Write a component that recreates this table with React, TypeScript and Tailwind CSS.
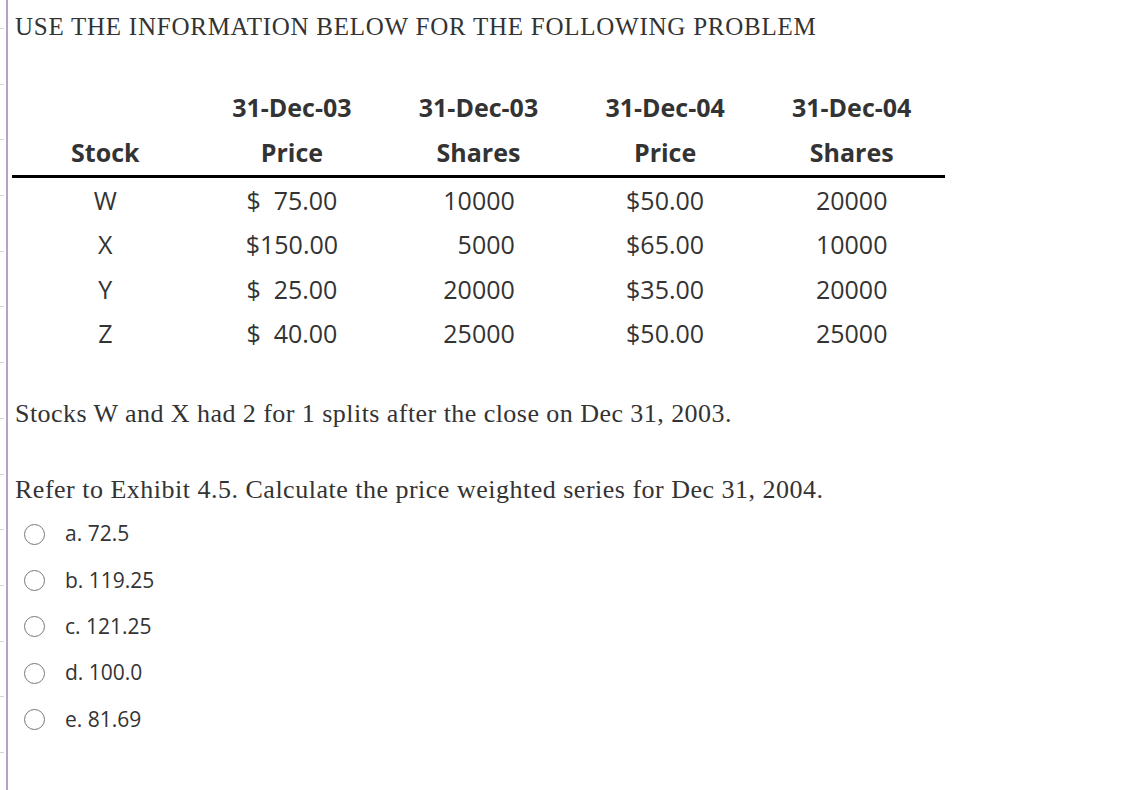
import React from 'react';

const serif = "font-['Liberation_Serif',Georgia,serif]";
const sans = "font-['Open_Sans',sans-serif]";

const rows = [
    { stock: 'W', p03: '$\u00a0\u00a075.00', s03: '10000', p04: '$50.00', s04: '20000' },
    { stock: 'X', p03: '$150.00', s03: '5000', p04: '$65.00', s04: '10000' },
    { stock: 'Y', p03: '$\u00a0\u00a025.00', s03: '20000', p04: '$35.00', s04: '20000' },
    { stock: 'Z', p03: '$\u00a0\u00a040.00', s03: '25000', p04: '$50.00', s04: '25000' },
];

const options = ['a. 72.5', 'b. 119.25', 'c. 121.25', 'd. 100.0', 'e. 81.69'];

export default function App() {
    return (
        <div className="flex min-h-[790px] bg-white text-[#333]">
            {/* gutter ticks */}
            <div className="w-[6px] flex flex-col pt-[28px]">
                {Array.from({ length: 14 }).map((_, i) => (
                    <div key={i} className="h-[55.7px] w-[4px] border-t border-[#d4d4d4]" />
                ))}
            </div>
            <div className="w-[2px] bg-[#b8a0c8]" />

            <div className="flex-1 pl-[4px]">
                <p className={`${serif} pl-[3px] pt-[12px] text-[25px] leading-[30px] tracking-[0.75px]`}>
                    USE THE INFORMATION BELOW FOR THE FOLLOWING PROBLEM
                </p>

                <div className={`${sans} w-[933px] mt-[43px] text-[25px]`}>
                    <div className="grid grid-cols-5 h-[45px] items-center font-bold text-center">
                        <div />
                        <div>31-Dec-03</div>
                        <div>31-Dec-03</div>
                        <div>31-Dec-04</div>
                        <div>31-Dec-04</div>
                    </div>
                    <div className="grid grid-cols-5 h-[48px] items-center font-bold text-center border-b-[3px] border-black">
                        <div>Stock</div>
                        <div>Price</div>
                        <div>Shares</div>
                        <div>Price</div>
                        <div>Shares</div>
                    </div>
                    {rows.map((r) => (
                        <div key={r.stock} className="grid grid-cols-5 h-[44.5px] items-center text-center">
                            <div>{r.stock}</div>
                            <div>{r.p03}</div>
                            <div className="text-right pr-[57px]">{r.s03}</div>
                            <div>{r.p04}</div>
                            <div>{r.s04}</div>
                        </div>
                    ))}
                </div>

                <p className={`${serif} pl-[3px] mt-[43px] text-[26px] leading-[30px] tracking-[0.45px]`}>
                    Stocks W and X had 2 for 1 splits after the close on Dec 31, 2003.
                </p>
                <p className={`${serif} pl-[3px] mt-[46px] text-[26px] leading-[30px] tracking-[0.5px]`}>
                    Refer to Exhibit 4.5. Calculate the price weighted series for Dec 31, 2004.
                </p>

                <div className={`${sans} mt-[6px] flex flex-col text-[21px]`}>
                    {options.map((o) => (
                        <label key={o} className="flex items-center h-[46.3px]">
                            <span className="ml-[12px] w-[21px] h-[21px] rounded-full border-[1.5px] border-[#777] bg-white" />
                            <span className="ml-[20px]">{o}</span>
                        </label>
                    ))}
                </div>
            </div>
        </div>
    );
}
